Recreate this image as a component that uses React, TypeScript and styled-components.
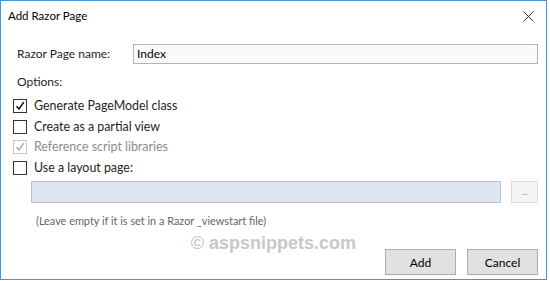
import React from 'react';
import styled, { createGlobalStyle } from 'styled-components';

const GlobalStyle = createGlobalStyle`
  html, body {
    margin: 0;
    padding: 0;
    background: #ffffff;
  }
  body {
    font-family: "Segoe UI", Lato, "Noto Sans", sans-serif;
    font-size: 12px;
    line-height: 16px;
    color: #1e1e1e;
  }
`;

const options = [
  { label: 'Generate PageModel class', checked: true, disabled: false },
  { label: 'Create as a partial view', checked: false, disabled: false },
  { label: 'Reference script libraries', checked: true, disabled: true },
  { label: 'Use a layout page:', checked: false, disabled: false },
];

const Window = styled.div`
  box-sizing: border-box;
  width: 547px;
  height: 280px;
  border: 1px solid #3c96e0;
  background: #ffffff;
  display: flex;
  flex-direction: column;
`;

const TitleBar = styled.div`
  height: 30px;
  display: flex;
  align-items: center;
  justify-content: space-between;
  padding: 0 12px 0 7px;
`;

const Title = styled.div`
  font-size: 11.5px;
  color: #000;
`;

const Body = styled.div`
  flex: 1;
  display: flex;
  flex-direction: column;
  padding: 13px 8px 4px 16px;
`;

const NameRow = styled.div`
  display: grid;
  grid-template-columns: 116px 1fr;
  align-items: center;
`;

const Label = styled.div`
  color: #1e1e1e;
`;

const NameInput = styled.div`
  box-sizing: border-box;
  height: 20px;
  border: 1px solid #abb4c4;
  background: #fafafa;
  padding: 0 3px;
  display: flex;
  align-items: center;
  color: #000;
`;

const OptionsLabel = styled.div`
  margin-top: 9px;
  height: 17px;
  line-height: 17px;
`;

const CheckList = styled.div`
  margin-top: 9px;
  margin-left: -4px;
  display: flex;
  flex-direction: column;
  gap: 6.5px;
`;

const CheckRow = styled.div<{ $disabled: boolean }>`
  display: flex;
  align-items: center;
  gap: 7px;
  height: 14px;
  font-size: 12.4px;
  color: ${(p) => (p.$disabled ? '#8d8d8d' : '#1e1e1e')};
`;

const Box = styled.div<{ $disabled: boolean }>`
  box-sizing: border-box;
  width: 14px;
  height: 14px;
  border: 1px solid ${(p) => (p.$disabled ? '#c7c7c7' : '#333333')};
  background: #ffffff;
  display: flex;
  align-items: center;
  justify-content: center;
`;

const LayoutRow = styled.div`
  margin-top: 6px;
  margin-left: 14px;
  display: flex;
  gap: 10px;
`;

const LayoutInput = styled.div`
  box-sizing: border-box;
  flex: 1;
  height: 22px;
  border: 1px solid #b9c3d2;
  background: #dde5f0;
`;

const BrowseButton = styled.div`
  box-sizing: border-box;
  width: 27px;
  height: 22px;
  border: 1px solid #dcdcdc;
  background: #f5f5f5;
  color: #9a9a9a;
  font-size: 9px;
  display: flex;
  align-items: center;
  justify-content: center;
`;

const Hint = styled.div`
  margin-top: 10px;
  margin-left: 19px;
  font-size: 10.9px;
  color: #666666;
`;

const Footer = styled.div`
  margin-top: auto;
  display: flex;
  align-items: flex-start;
  justify-content: flex-end;
  gap: 11px;
`;

const Watermark = styled.div`
  margin-top: -16px;
  margin-right: 18px;
  font-family: "Liberation Sans", Arial, sans-serif;
  font-weight: bold;
  font-size: 18px;
  line-height: 21px;
  color: #c8c8c8;
`;

const Button = styled.button`
  box-sizing: border-box;
  width: 71px;
  height: 26px;
  border: 1px solid #adadad;
  background: #e1e1e1;
  font-family: inherit;
  font-size: 12px;
  color: #000;
  padding: 0;
`;

const Check = ({ color }: { color: string }) => (
  <svg width="10" height="10" viewBox="0 0 10 10">
    <path d="M1.5 5.2 L4 8 L8.8 1.2" fill="none" stroke={color} strokeWidth="1.4" />
  </svg>
);

const App = () => {
  return (
    <>
      <GlobalStyle />
      <Window>
        <TitleBar>
          <Title>Add Razor Page</Title>
          <svg width="11" height="11" viewBox="0 0 11 11">
            <path d="M0.5 0.5 L10.5 10.5 M10.5 0.5 L0.5 10.5" stroke="#333" strokeWidth="1" />
          </svg>
        </TitleBar>
        <Body>
          <NameRow>
            <Label>Razor Page name:</Label>
            <NameInput>Index</NameInput>
          </NameRow>
          <OptionsLabel>Options:</OptionsLabel>
          <CheckList>
            {options.map((opt) => (
              <CheckRow key={opt.label} $disabled={opt.disabled}>
                <Box $disabled={opt.disabled}>
                  {opt.checked && <Check color={opt.disabled ? '#a8a8a8' : '#000'} />}
                </Box>
                {opt.label}
              </CheckRow>
            ))}
          </CheckList>
          <LayoutRow>
            <LayoutInput />
            <BrowseButton>...</BrowseButton>
          </LayoutRow>
          <Hint>(Leave empty if it is set in a Razor _viewstart file)</Hint>
          <Footer>
            <Watermark>© aspsnippets.com</Watermark>
            <Button>Add</Button>
            <Button>Cancel</Button>
          </Footer>
        </Body>
      </Window>
    </>
  );
};

export default App;
